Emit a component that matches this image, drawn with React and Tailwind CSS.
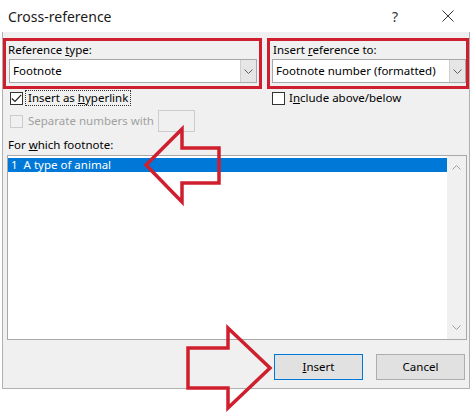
import { Fragment } from "react";

// small helpers for the win32-ish controls
function Chevron({ up = false, color = "#606060" }) {
    return (
        <svg width="9" height="5" viewBox="0 0 9 5">
            <polyline
                points={up ? "0.5,4.5 4.5,0.5 8.5,4.5" : "0.5,0.5 4.5,4.5 8.5,0.5"}
                fill="none"
                stroke={color}
                strokeWidth="1"
            />
        </svg>
    )
}

function Combo({ value }) {
    return (
        <div className="flex h-[24px] border border-[#a8a8a8] bg-white">
            <div className="flex-1 flex items-center pl-[3px] text-[11.5px] text-black">{value}</div>
            <div className="w-[16px] flex items-center justify-center bg-[#e6e6e6] border-l border-[#cfcfcf]">
                <Chevron />
            </div>
        </div>
    )
}

function CheckBox({ checked = false, disabled = false }) {
    return (
        <div
            className={
                disabled
                    ? "w-[13px] h-[13px] border border-[#cccccc] bg-[#f0f0f0]"
                    : "w-[13px] h-[13px] border border-[#333333] bg-white flex items-center justify-center"
            }
        >
            {checked && (
                <svg width="11" height="9" viewBox="0 0 11 9">
                    <polyline points="0.8,4.5 4,7.5 10.2,0.8" fill="none" stroke="#222" strokeWidth="1.2" />
                </svg>
            )}
        </div>
    )
}

export default function App() {
    return (
        <div
            className="relative w-[474px] h-[414px] bg-white overflow-hidden text-black"
            style={{ fontFamily: '"Noto Sans", "Open Sans", sans-serif' }}
        >
            <div className="ml-[2px] w-[468px]">
                {/* title bar */}
                <div className="h-[32px] flex items-center bg-white">
                    <div className="pl-[6px] text-[14px] text-[#1a1a1a]">Cross-reference</div>
                    <div className="ml-auto w-[30px] text-center text-[14px] text-[#333]">?</div>
                    <div className="ml-[23px] mr-[7px] w-[30px] flex justify-center">
                        <svg width="12" height="12" viewBox="0 0 12 12">
                            <path d="M0.5 0.5 L11.5 11.5 M11.5 0.5 L0.5 11.5" stroke="#333" strokeWidth="1" />
                        </svg>
                    </div>
                </div>

                {/* dialog body */}
                <div className="bg-[#f0f0f0] border-l border-r border-b border-[#b0b0b0] pt-[6px] pb-[8px]">
                    {/* two combo groups */}
                    <div className="flex">
                        <div className="w-[259px] h-[51px] border-[3px] border-[#cf1f2e]">
                            <div className="h-[18px] flex items-center pl-[2px] text-[11.5px]">
                                <span>Reference <span className="underline">t</span>ype:</span>
                            </div>
                            <div className="ml-[3px] mr-[2px]">
                                <Combo value="Footnote" />
                            </div>
                        </div>
                        <div className="ml-[5px] flex-1 h-[51px] border-[3px] border-[#cf1f2e]">
                            <div className="h-[18px] flex items-center pl-[3px] text-[11.5px]">
                                <span>Insert <span className="underline">r</span>eference to:</span>
                            </div>
                            <div className="ml-[2px]">
                                <Combo value="Footnote number (formatted)" />
                            </div>
                        </div>
                    </div>

                    {/* checkboxes row */}
                    <div className="flex mt-[1px] h-[16px]">
                        <div className="w-[265px] pl-[7px] flex items-center">
                            <CheckBox checked />
                            <div className="ml-[2px] px-[2px] h-[16px] flex items-center border border-dotted border-[#333] text-[11.5px]">
                                <span>Insert as <span className="underline">h</span>yperlink</span>
                            </div>
                        </div>
                        <div className="pl-[4px] flex items-center">
                            <CheckBox />
                            <div className="ml-[4px] text-[11.5px]">
                                I<span className="underline">n</span>clude above/below
                            </div>
                        </div>
                    </div>

                    {/* disabled separator row */}
                    <div className="flex items-center mt-[4px] h-[22px] pl-[7px]">
                        <CheckBox disabled />
                        <div className="ml-[5px] text-[11.5px] text-[#a0a0a0]">Separate numbers with</div>
                        <div className="ml-[4px] w-[37px] h-[22px] border border-[#cccccc] bg-[#f0f0f0]" />
                    </div>

                    <div className="mt-[3px] h-[20px] flex items-center pl-[5px] text-[11.5px]">
                        <span>For <span className="underline">w</span>hich footnote:</span>
                    </div>

                    {/* listbox */}
                    <div className="ml-[4px] w-[460px] h-[185px] flex border border-[#a8a8a8] bg-white">
                        <div className="flex-1 pt-[2px]">
                            <div className="h-[14px] flex items-center bg-[#0078d7] text-white text-[11.5px] pl-[3px]">
                                <span>1&nbsp;&nbsp;A type of animal</span>
                            </div>
                        </div>
                        <div className="w-[19px] bg-[#f0f0f0] flex flex-col items-center justify-between py-[9px]">
                            <Chevron up color="#a0a0a0" />
                            <Chevron color="#a0a0a0" />
                        </div>
                    </div>

                    {/* buttons */}
                    <div className="mt-[14px] flex justify-end gap-[13px] pr-[4px]">
                        <button className="w-[89px] h-[26px] bg-[#e1e1e1] border border-[#0078d7] text-[11.5px]">
                            <span className="underline">I</span>nsert
                        </button>
                        <button className="w-[89px] h-[26px] bg-[#e1e1e1] border border-[#adadad] text-[11.5px]">
                            Cancel
                        </button>
                    </div>
                </div>
            </div>

            {/* red annotation arrows drawn over the screenshot */}
            <svg className="absolute left-0 top-0 pointer-events-none" width="474" height="414">
                <polygon
                    points="146,165 182,129 182,148 219,148 219,183 182,183 182,202"
                    fill="none"
                    stroke="#cf1f2e"
                    strokeWidth="3.5"
                />
                <polygon
                    points="188,348 228,348 228,328 270,368 228,408 228,388 188,388"
                    fill="none"
                    stroke="#cf1f2e"
                    strokeWidth="3.5"
                />
            </svg>
        </div>
    )
}
